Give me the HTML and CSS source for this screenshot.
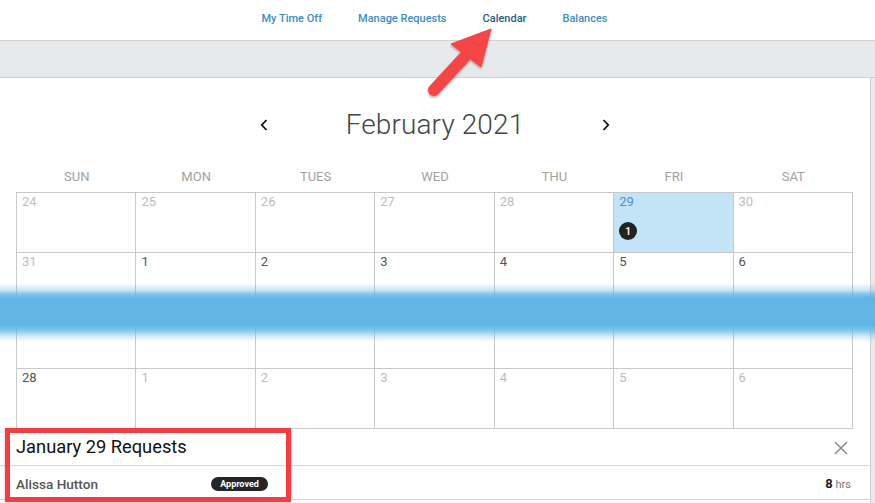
FILE: index.html
```html
<!DOCTYPE html>
<html>
<head>
<meta charset="utf-8">
<link rel="stylesheet" href="styles.css">
</head>
<body>
<div class="page">
  <nav class="topnav">
    <a class="navlink">My Time Off</a>
    <a class="navlink">Manage Requests</a>
    <a class="navlink active">Calendar</a>
    <a class="navlink">Balances</a>
  </nav>
  <div class="band"></div>
  <main class="panel">
    <div class="monthbar">
      <svg class="chev" width="8" height="12" viewBox="0 0 8 12"><path d="M6.5 1 L1.8 6 L6.5 11" fill="none" stroke="#111" stroke-width="1.8"/></svg>
      <h1 class="month">February 2021</h1>
      <svg class="chev" width="8" height="12" viewBox="0 0 8 12"><path d="M1.5 1 L6.2 6 L1.5 11" fill="none" stroke="#111" stroke-width="1.8"/></svg>
    </div>
    <div class="daynames">
      <div>SUN</div><div>MON</div><div>TUES</div><div>WED</div><div>THU</div><div>FRI</div><div>SAT</div>
    </div>
    <div class="grid">
      <div class="cell out r1"><span class="num">24</span></div>
      <div class="cell out r1"><span class="num">25</span></div>
      <div class="cell out r1"><span class="num">26</span></div>
      <div class="cell out r1"><span class="num">27</span></div>
      <div class="cell out r1"><span class="num">28</span></div>
      <div class="cell sel r1"><span class="num">29</span><span class="badge">1</span></div>
      <div class="cell out r1"><span class="num">30</span></div>

      <div class="cell out r2"><span class="num">31</span></div>
      <div class="cell r2"><span class="num">1</span></div>
      <div class="cell r2"><span class="num">2</span></div>
      <div class="cell r2"><span class="num">3</span></div>
      <div class="cell r2"><span class="num">4</span></div>
      <div class="cell r2"><span class="num">5</span></div>
      <div class="cell r2"><span class="num">6</span></div>

      <div class="cell r3"><span class="num">28</span></div>
      <div class="cell out r3"><span class="num">1</span></div>
      <div class="cell out r3"><span class="num">2</span></div>
      <div class="cell out r3"><span class="num">3</span></div>
      <div class="cell out r3"><span class="num">4</span></div>
      <div class="cell out r3"><span class="num">5</span></div>
      <div class="cell out r3"><span class="num">6</span></div>
    </div>
    <section class="requests">
      <div class="reqhead">
        <h2 class="reqtitle">January 29 Requests</h2>
        <svg class="close" width="14" height="14" viewBox="0 0 14 14"><path d="M1 1 L13 13 M13 1 L1 13" stroke="#8c8c8c" stroke-width="1.6" fill="none"/></svg>
      </div>
      <div class="reqrow">
        <span class="who">Alissa Hutton</span>
        <span class="pill">Approved</span>
        <span class="hrs"><b>8</b> hrs</span>
      </div>
    </section>
  </main>

  <div class="blurband"></div>
  <div class="redbox"></div>
  <svg class="arrow" width="100" height="85" viewBox="0 0 100 85">
    <defs>
      <filter id="sh" x="-20%" y="-20%" width="140%" height="140%">
        <feDropShadow dx="0" dy="1.5" stdDeviation="1.2" flood-color="#000" flood-opacity="0.35"/>
      </filter>
    </defs>
    <g filter="url(#sh)" fill="#f44447" stroke="#f44447">
      <line x1="14" y1="70" x2="50" y2="31" stroke-width="12" stroke-linecap="round"/>
      <polygon points="71,9 31,24 61,47" stroke-width="1" stroke-linejoin="round"/>
    </g>
  </svg>
</div>
</body>
</html>
```
FILE: styles.css
```css
html, body {
  margin: 0;
  padding: 0;
}
body {
  background: #e8e9ec;
  font-family: Roboto, "Liberation Sans", Arial, sans-serif;
  width: 875px;
  height: 503px;
  overflow: hidden;
}
.page {
  position: relative;
  width: 875px;
  height: 503px;
  overflow: hidden;
}
.topnav {
  height: 41px;
  background: #fff;
  border-bottom: 1px solid #d2d2d2;
  display: flex;
  justify-content: center;
  align-items: flex-start;
  gap: 36px;
  padding-right: 6px;
  box-sizing: border-box;
  padding-top: 12px;
}
.navlink {
  font-size: 11px;
  font-weight: 500;
  color: #3d8cc4;
  line-height: 13px;
}
.navlink.active {
  color: #2a5d84;
}
.band {
  height: 36px;
  border-bottom: 1px solid #cfcfcf;
}
.panel {
  background: #fff;
  width: 871px;
  border-right: 1px solid #cfcfcf;
  box-sizing: border-box;
  height: 425px;
}
.monthbar {
  display: flex;
  justify-content: center;
  align-items: center;
  gap: 78px;
  padding-top: 31px;
  height: 32px;
}
.month {
  margin: 0;
  font-size: 28px;
  font-weight: 300;
  color: #444;
  line-height: 32px;
  letter-spacing: 0.1px;
}
.chev {
  display: block;
}
.daynames {
  display: grid;
  grid-template-columns: repeat(7, 1fr);
  margin: 28px 17px 0 17px;
  font-size: 13px;
  color: #a2a2a2;
  line-height: 16px;
  text-align: center;
}
.grid {
  display: grid;
  grid-template-columns: repeat(7, 1fr);
  margin: 7px 17px 0 16px;
  border-left: 1px solid #c9c9c9;
  border-top: 1px solid #c9c9c9;
}
.cell {
  border-right: 1px solid #c9c9c9;
  border-bottom: 1px solid #c9c9c9;
  box-sizing: border-box;
  padding: 1px 5px;
  display: flex;
  flex-direction: column;
  align-items: flex-start;
}
.r1 { height: 60px; }
.r2 { height: 116px; }
.r3 { height: 60px; }
.num {
  font-size: 13px;
  line-height: 16px;
  color: #555;
}
.out .num {
  color: #bdbdbd;
}
.sel {
  background: #c3e3f6;
}
.sel .num {
  color: #4a92c4;
}
.badge {
  margin-top: 12px;
  width: 18px;
  height: 18px;
  border-radius: 50%;
  background: #222;
  color: #fff;
  font-size: 11px;
  font-weight: 500;
  display: flex;
  align-items: center;
  justify-content: center;
  line-height: 1;
}
.requests {
  display: flex;
  flex-direction: column;
}
.reqhead {
  height: 37px;
  border-bottom: 1px solid #d6d6d6;
  display: flex;
  align-items: center;
  justify-content: space-between;
  padding: 0 22px 0 16px;
  box-sizing: border-box;
}
.reqtitle {
  margin: 0;
  font-size: 18.3px;
  font-weight: 400;
  color: #111;
  line-height: 22px;
}
.close {
  display: block;
  margin-top: 2px;
}
.reqrow {
  height: 34px;
  border-bottom: 1px solid #d6d6d6;
  display: flex;
  align-items: center;
  padding: 2px 19px 0 16px;
  box-sizing: border-box;
}
.who {
  width: 195px;
  font-size: 13.6px;
  font-weight: 500;
  color: #555;
}
.pill {
  background: #262626;
  color: #fff;
  font-size: 9px;
  font-weight: 700;
  height: 14px;
  line-height: 14px;
  width: 57px;
  text-align: center;
  border-radius: 7px;
}
.hrs {
  margin-left: auto;
  font-size: 11px;
  color: #777;
}
.hrs b {
  font-size: 13px;
  font-weight: 700;
  color: #222;
}
.blurband {
  position: absolute;
  left: 0;
  top: 283px;
  width: 875px;
  height: 59px;
  background: linear-gradient(to bottom,
    rgba(98,182,230,0) 0%,
    rgba(98,182,230,0.35) 12%,
    rgba(98,182,230,0.85) 20%,
    #62b6e6 26%,
    #62b6e6 72%,
    rgba(98,182,230,0.8) 80%,
    rgba(98,182,230,0.3) 90%,
    rgba(98,182,230,0) 100%);
}
.redbox {
  position: absolute;
  left: 5px;
  top: 428px;
  width: 286px;
  height: 74px;
  border: 5px solid #f23d44;
  box-sizing: border-box;
  box-shadow: 0 1px 3px rgba(0,0,0,0.25);
}
.arrow {
  position: absolute;
  left: 420px;
  top: 20px;
}
```
